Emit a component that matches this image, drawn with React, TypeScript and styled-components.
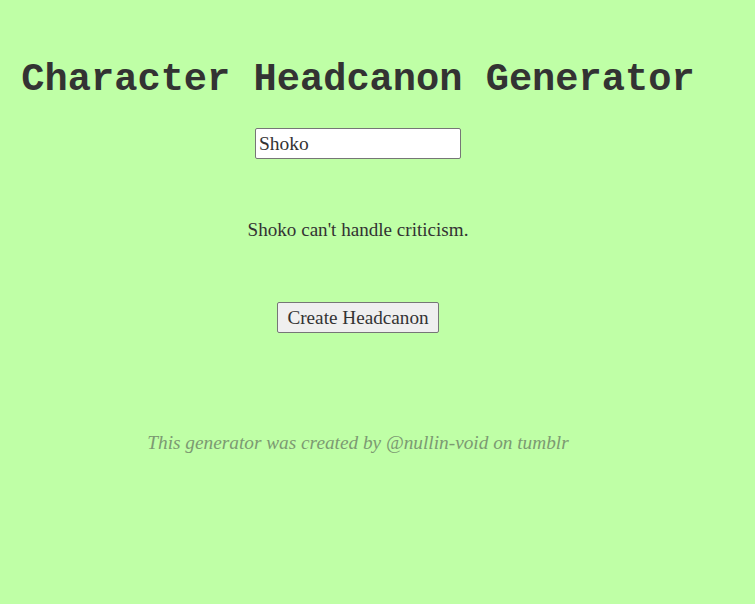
import styled, { createGlobalStyle } from "styled-components";
import { useState } from "react";

const GlobalStyle = createGlobalStyle`
    html, body {
        background-color: #bfffa6;
    }
    body {
        margin: 8px;
        color: #333333;
        font-family: "Liberation Serif", "Times New Roman", serif;
    }
`

const Wrapper = styled.main`
    width: 700px;
    display: flex;
    flex-direction: column;
    align-items: center;
    text-align: center;
`

const Title = styled.h1`
    font: normal normal bold 38.7px "Liberation Mono", "Courier New", monospace;
    color: #333333;
    margin: 50px 0px 26px;
`

const NameInput = styled.input`
    width: 206px;
    height: 31px;
    box-sizing: border-box;
    font: 19.5px "Liberation Serif", serif;
    color: #333333;
    padding: 1px 3px;
    border: 1px solid #767676;
    border-radius: 2px;
    background: #ffffff;
`

const Result = styled.p`
    font-size: 19.1px;
    line-height: 23px;
    margin: 59px 0px 0px;
`

const CreateButton = styled.button`
    margin: 61px 0px 0px;
    height: 31px;
    padding: 0px 9.5px;
    font: 19.2px "Liberation Serif", serif;
    color: #333333;
    background: #efefef;
    border: 1px solid #767676;
    border-radius: 2px;
`

const Credit = styled.p`
    font-size: 19.3px;
    line-height: 23px;
    font-style: italic;
    color: #7c9a72;
    margin: 98px 0px 0px;
`

const traits = [
    "can't handle criticism.",
    "secretly loves rainy days.",
    "hums when nervous.",
]

export default function App() {
    const [name, setName] = useState("Shoko")
    const [trait, setTrait] = useState(0)

    return (
        <>
            <GlobalStyle />
            <Wrapper>
                <Title>Character Headcanon Generator</Title>
                <NameInput value={name} onChange={e => setName(e.target.value)} />
                <Result>{name} {traits[trait]}</Result>
                <CreateButton onClick={() => setTrait((trait + 1) % traits.length)}>
                    Create Headcanon
                </CreateButton>
                <Credit>This generator was created by @nullin-void on tumblr</Credit>
            </Wrapper>
        </>
    )
}
